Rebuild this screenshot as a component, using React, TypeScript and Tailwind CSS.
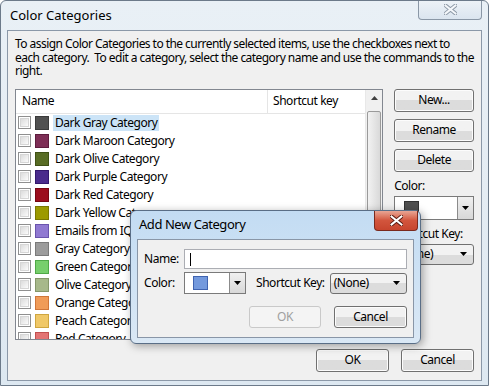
const FONT = { fontFamily: '"Noto Sans", "Segoe UI", sans-serif' };

type Cat = { name: string; color: string; border: string };

const categories: Cat[] = [
  { name: "Dark Gray Category", color: "#505050", border: "#3a3a3a" },
  { name: "Dark Maroon Category", color: "#7e2e56", border: "#5e1c3e" },
  { name: "Dark Olive Category", color: "#586c24", border: "#3f5015" },
  { name: "Dark Purple Category", color: "#4a2b8c", border: "#33186c" },
  { name: "Dark Red Category", color: "#9c0e1d", border: "#770612" },
  { name: "Dark Yellow Category", color: "#9c9a00", border: "#7a7800" },
  { name: "Emails from IQ", color: "#9079d2", border: "#6a54ad" },
  { name: "Gray Category", color: "#9c9c9c", border: "#7a7a7a" },
  { name: "Green Category", color: "#77cf6c", border: "#4fa947" },
  { name: "Olive Category", color: "#a7b88a", border: "#85976a" },
  { name: "Orange Category", color: "#f09b58", border: "#d0763a" },
  { name: "Peach Category", color: "#f0c868", border: "#cfa640" },
  { name: "Red Category", color: "#e37474", border: "#c15050" },
];

function WinButton({
  children,
  className = "",
  disabled = false,
}: {
  children: React.ReactNode;
  className?: string;
  disabled?: boolean;
}) {
  return (
    <div
      className={`flex items-center justify-center rounded-[3px] border text-[12px] ${
        disabled
          ? "border-[#c9c9c9] bg-[#f4f4f4] text-[#a0a0a0]"
          : "border-[#707070] bg-gradient-to-b from-[#f2f2f2] from-50% to-[#dcdcdc] to-50% text-black shadow-[inset_0_0_0_1px_#fcfcfc]"
      } ${className}`}
    >
      {children}
    </div>
  );
}

function Checkbox() {
  return (
    <div className="flex h-[13px] w-[13px] items-center justify-center border border-[#8f8f8f] bg-white">
      <div className="h-[9px] w-[9px] border border-[#d6d6d6] bg-gradient-to-br from-[#dcdcdc] to-[#fbfbfb]" />
    </div>
  );
}

function DropArrow() {
  return (
    <svg width="7" height="4" viewBox="0 0 7 4">
      <path d="M0 0h7L3.5 4z" fill="#000" />
    </svg>
  );
}

function CloseGlyph({ color }: { color: string }) {
  // Win7 caption "x": thick cross with an outline
  return (
    <svg width="13" height="11" viewBox="0 0 13 11">
      <path
        d="M1.5 1.5l10 8M11.5 1.5l-10 8"
        stroke={color === "white" ? "#5a1a10" : "#8c98a6"}
        strokeWidth="4"
        strokeLinecap="square"
      />
      <path
        d="M1.5 1.5l10 8M11.5 1.5l-10 8"
        stroke={color === "white" ? "#ffffff" : "#f4f7fa"}
        strokeWidth="2"
        strokeLinecap="square"
      />
    </svg>
  );
}

function AddNewCategory() {
  return (
    <div className="absolute left-[129px] top-[209px] h-[134px] w-[291px] rounded-[6px] border border-[#5a6e86] bg-gradient-to-b from-[#c3dcf3] to-[#dae8f5] shadow-[2px_2px_8px_rgba(0,0,0,0.35)]">
      <div className="flex h-[28px] items-center pl-[8px] text-[13px] text-black">
        Add New Category
      </div>
      <div className="absolute right-[2px] top-[0px] flex h-[20px] w-[44px] items-center justify-center rounded-b-[4px] border border-t-0 border-[#7a2a1e] bg-gradient-to-b from-[#e8a594] via-[#d2553d] to-[#c7452e]">
        <CloseGlyph color="white" />
      </div>
      <div className="mx-[6px] flex h-[99px] flex-col border border-[#8996a7] bg-[#f0f0f0] px-[6px] pt-[9px]">
        <div className="flex items-center">
          <span className="w-[40px] text-[12px]">Name:</span>
          <div className="flex h-[20px] flex-1 items-center border border-[#abadb3] bg-white pl-[5px]">
            <div className="h-[13px] w-px bg-black" />
          </div>
        </div>
        <div className="mt-[3px] flex items-center">
          <span className="w-[40px] text-[12px]">Color:</span>
          <div className="flex h-[22px] w-[62px] items-center border border-[#7a7a7a] bg-white">
            <div className="ml-[8px] h-[14px] w-[15px] border border-[#3f63b0] bg-[#7399dd]" />
            <div className="ml-auto flex h-[20px] w-[16px] items-center justify-center border-l border-[#8b8b8b] bg-gradient-to-b from-[#f0f0f0] to-[#d8d8d8]">
              <DropArrow />
            </div>
          </div>
          <span className="ml-[10px] text-[12px]">Shortcut Key:</span>
          <div className="ml-[5px] flex h-[21px] flex-1 items-center justify-between rounded-[3px] border border-[#707070] bg-gradient-to-b from-[#f2f2f2] from-50% to-[#dcdcdc] to-50% pl-[3px] pr-[6px] text-[12px]">
            (None)
            <DropArrow />
          </div>
        </div>
        <div className="mt-[12px] flex justify-end gap-[13px]">
          <WinButton disabled className="h-[22px] w-[72px]">
            OK
          </WinButton>
          <WinButton className="h-[22px] w-[73px]">Cancel</WinButton>
        </div>
      </div>
    </div>
  );
}

export default function App() {
  return (
    <div
      style={FONT}
      className="relative h-[386px] w-[489px] overflow-hidden rounded-t-[6px] border border-[#6c7a8a] bg-gradient-to-b from-[#e9f0f6] via-[#e4ecf3] to-[#dde8f1] tracking-[-0.45px] text-black"
    >
      {/* title bar */}
      <div className="flex h-[29px] items-center pl-[9px] text-[13px] tracking-normal">Color Categories</div>
      <div className="absolute right-[6px] top-[-1px] flex h-[20px] w-[64px] items-center justify-center rounded-b-[4px] border border-t-0 border-[#8a97a6] bg-gradient-to-b from-[#eef3f8] to-[#dbe5ef]">
        <CloseGlyph color="gray" />
      </div>

      {/* client area */}
      <div className="mx-[6px] flex h-[351px] flex-col border border-[#8b98a8] bg-[#f0f0f0] pl-[7px] pr-[7px]">
        <div className="mt-[6px] flex flex-col whitespace-nowrap text-[12px] leading-[13.5px] tracking-[-0.55px]">
          <span>To assign Color Categories to the currently selected items, use the checkboxes next to</span>
          <span>each category.&nbsp; To edit a category, select the category name and use the commands to the</span>
          <span>right.</span>
        </div>

        <div className="mt-[11px] flex">
          {/* list */}
          <div className="flex h-[251px] w-[369px] border border-[#828790] bg-white">
            <div className="flex flex-1 flex-col overflow-hidden">
              <div className="flex h-[24px] shrink-0 items-center border-b border-[#e5e5e5] text-[12px]">
                <div className="w-[251px] pl-[6px]">Name</div>
                <div className="flex h-full flex-1 items-center border-l border-[#e5e5e5] pl-[5px]">
                  Shortcut key
                </div>
              </div>
              {categories.map((c, i) => (
                <div key={c.name} className="flex h-[18px] shrink-0 items-center pl-[2px] text-[12px]">
                  <Checkbox />
                  <div
                    className="ml-[4px] h-[14px] w-[14px] border"
                    style={{ backgroundColor: c.color, borderColor: c.border }}
                  />
                  <span
                    className={`ml-[4px] px-[2px] leading-[16px] ${i === 0 ? "bg-[#cce4f7]" : ""}`}
                  >
                    {c.name}
                  </span>
                </div>
              ))}
            </div>
            {/* scrollbar */}
            <div className="flex w-[17px] flex-col border-l border-[#e8e8e8] bg-[#f0f0f0]">
              <div className="flex h-[17px] items-center justify-center">
                <svg width="7" height="4" viewBox="0 0 7 4">
                  <path d="M0 4h7L3.5 0z" fill="#404040" />
                </svg>
              </div>
              <div className="mx-[1px] mt-[4px] flex h-[210px] flex-col items-center justify-center gap-[2px] rounded-[2px] border border-[#9a9a9a] bg-gradient-to-r from-[#f2f2f2] to-[#d9d9d9]">
                <div className="h-px w-[7px] bg-[#6a6a6a]" />
                <div className="h-px w-[7px] bg-[#6a6a6a]" />
                <div className="h-px w-[7px] bg-[#6a6a6a]" />
              </div>
            </div>
          </div>

          {/* right column */}
          <div className="ml-[11px] flex w-[80px] flex-col text-[12px]">
            <WinButton className="h-[23px]">New...</WinButton>
            <WinButton className="mt-[7px] h-[23px]">Rename</WinButton>
            <WinButton className="mt-[7px] h-[23px]">Delete</WinButton>
            <span className="mt-[5px]">Color:</span>
            <div className="mt-[1px] flex h-[24px] items-center border border-[#7a7a7a] bg-white">
              <div className="ml-[9px] h-[14px] w-[15px] border border-[#333] bg-[#505050]" />
              <div className="ml-auto flex h-[22px] w-[16px] items-center justify-center border-l border-[#8b8b8b] bg-gradient-to-b from-[#f0f0f0] to-[#d8d8d8]">
                <DropArrow />
              </div>
            </div>
            <span className="mt-[5px]">Shortcut Key:</span>
            <div className="mt-[1px] flex h-[21px] items-center justify-between rounded-[3px] border border-[#707070] bg-gradient-to-b from-[#f2f2f2] from-50% to-[#dcdcdc] to-50% pl-[3px] pr-[6px]">
              (None)
              <DropArrow />
            </div>
          </div>
        </div>

        <div className="mt-[9px] flex justify-end gap-[12px]">
          <WinButton className="h-[23px] w-[73px]">OK</WinButton>
          <WinButton className="h-[23px] w-[73px]">Cancel</WinButton>
        </div>
      </div>

      <AddNewCategory />
    </div>
  );
}
